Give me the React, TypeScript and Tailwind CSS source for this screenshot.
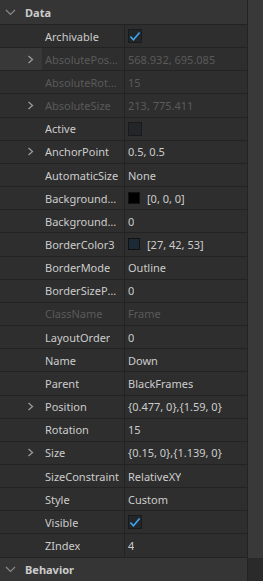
import React from "react";

type RowProps = {
  name: string;
  value: React.ReactNode;
  expandable?: boolean;
  disabled?: boolean;
  hovered?: boolean;
};

function Chevron() {
  return (
    <svg width="7" height="9" viewBox="0 0 7 9" className="block">
      <path d="M1.5 1 L5.5 4.5 L1.5 8" fill="none" stroke="#9a9a9a" strokeWidth="1.3" />
    </svg>
  );
}

function ChevronDown() {
  return (
    <svg width="11" height="7" viewBox="0 0 11 7" className="block">
      <path d="M1 1 L5.5 5.5 L10 1" fill="none" stroke="#8a8a8a" strokeWidth="1.2" />
    </svg>
  );
}

function Check({ checked }: { checked: boolean }) {
  return (
    <div className="w-[14px] h-[14px] bg-[#232628] border border-[#1a1a1a] flex items-center justify-center">
      {checked && (
        <svg width="13" height="11" viewBox="0 0 13 11" className="block">
          <path d="M1.5 5.5 L4.8 9 L11.5 1.2" fill="none" stroke="#3da4f0" strokeWidth="1.8" />
        </svg>
      )}
    </div>
  );
}

function Swatch({ color, label }: { color: string; label: string }) {
  return (
    <div className="flex items-center gap-[7px]">
      <div className="w-[12px] h-[12px] border border-[#111] shrink-0" style={{ background: color }} />
      <span>{label}</span>
    </div>
  );
}

function Row({ name, value, expandable, disabled, hovered }: RowProps) {
  const txt = disabled ? "text-[#5a5a5a]" : "text-[#cccccc]";
  return (
    <div className="flex h-[23.17px] border-b border-[#232323] shrink-0">
      <div className={`w-[42px] h-full flex items-center justify-end pr-[8px] ${hovered ? "bg-[#383838]" : ""}`}>
        {expandable && <Chevron />}
      </div>
      <div className={`w-[83px] h-full border-r border-[#232323] pl-[3px] pr-[5px] flex items-center min-w-0 ${txt}`}>
        <span className="truncate">{name}</span>
      </div>
      <div className={`flex-1 h-full pl-[3px] flex items-center min-w-0 ${txt}`}>
        <div className="truncate">{value}</div>
      </div>
    </div>
  );
}

const rows: RowProps[] = [
  { name: "Archivable", value: <Check checked /> },
  { name: "AbsolutePosition", value: "568.932, 695.085", expandable: true, disabled: true, hovered: true },
  { name: "AbsoluteRotation", value: "15", disabled: true },
  { name: "AbsoluteSize", value: "213, 775.411", expandable: true, disabled: true },
  { name: "Active", value: <Check checked={false} /> },
  { name: "AnchorPoint", value: "0.5, 0.5", expandable: true },
  { name: "AutomaticSize", value: "None" },
  { name: "BackgroundColor3", value: <Swatch color="#000000" label="[0, 0, 0]" /> },
  { name: "BackgroundTransparency", value: "0" },
  { name: "BorderColor3", value: <Swatch color="#1b2a35" label="[27, 42, 53]" /> },
  { name: "BorderMode", value: "Outline" },
  { name: "BorderSizePixel", value: "0" },
  { name: "ClassName", value: "Frame", disabled: true },
  { name: "LayoutOrder", value: "0" },
  { name: "Name", value: "Down" },
  { name: "Parent", value: "BlackFrames" },
  { name: "Position", value: "{0.477, 0},{1.59, 0}", expandable: true },
  { name: "Rotation", value: "15" },
  { name: "Size", value: "{0.15, 0},{1.139, 0}", expandable: true },
  { name: "SizeConstraint", value: "RelativeXY" },
  { name: "Style", value: "Custom" },
  { name: "Visible", value: <Check checked /> },
  { name: "ZIndex", value: "4" },
];

export default function App() {
  return (
    <div className="flex w-[263px] h-[581px] overflow-hidden bg-[#2e2e2e] font-['Noto_Sans',sans-serif] text-[11px] leading-[15px]">
      <div className="w-[248px] flex flex-col border-r border-[#232323]">
        <div className="h-[25px] shrink-0 bg-[#353535] border-b border-[#232323] flex items-center pl-[5px] gap-[9px] text-[#cccccc] font-bold">
          <ChevronDown />
          <span>Data</span>
        </div>
        {rows.map((r) => (
          <Row key={r.name} {...r} />
        ))}
        <div className="flex-1 bg-[#353535] flex items-center pl-[5px] gap-[9px] text-[#cccccc] font-bold">
          <ChevronDown />
          <span>Behavior</span>
        </div>
      </div>
      <div className="w-[15px] flex flex-col">
        <div className="h-[558px] bg-[#393939]" />
        <div className="flex-1 bg-[#2a2a2a]" />
      </div>
    </div>
  );
}
